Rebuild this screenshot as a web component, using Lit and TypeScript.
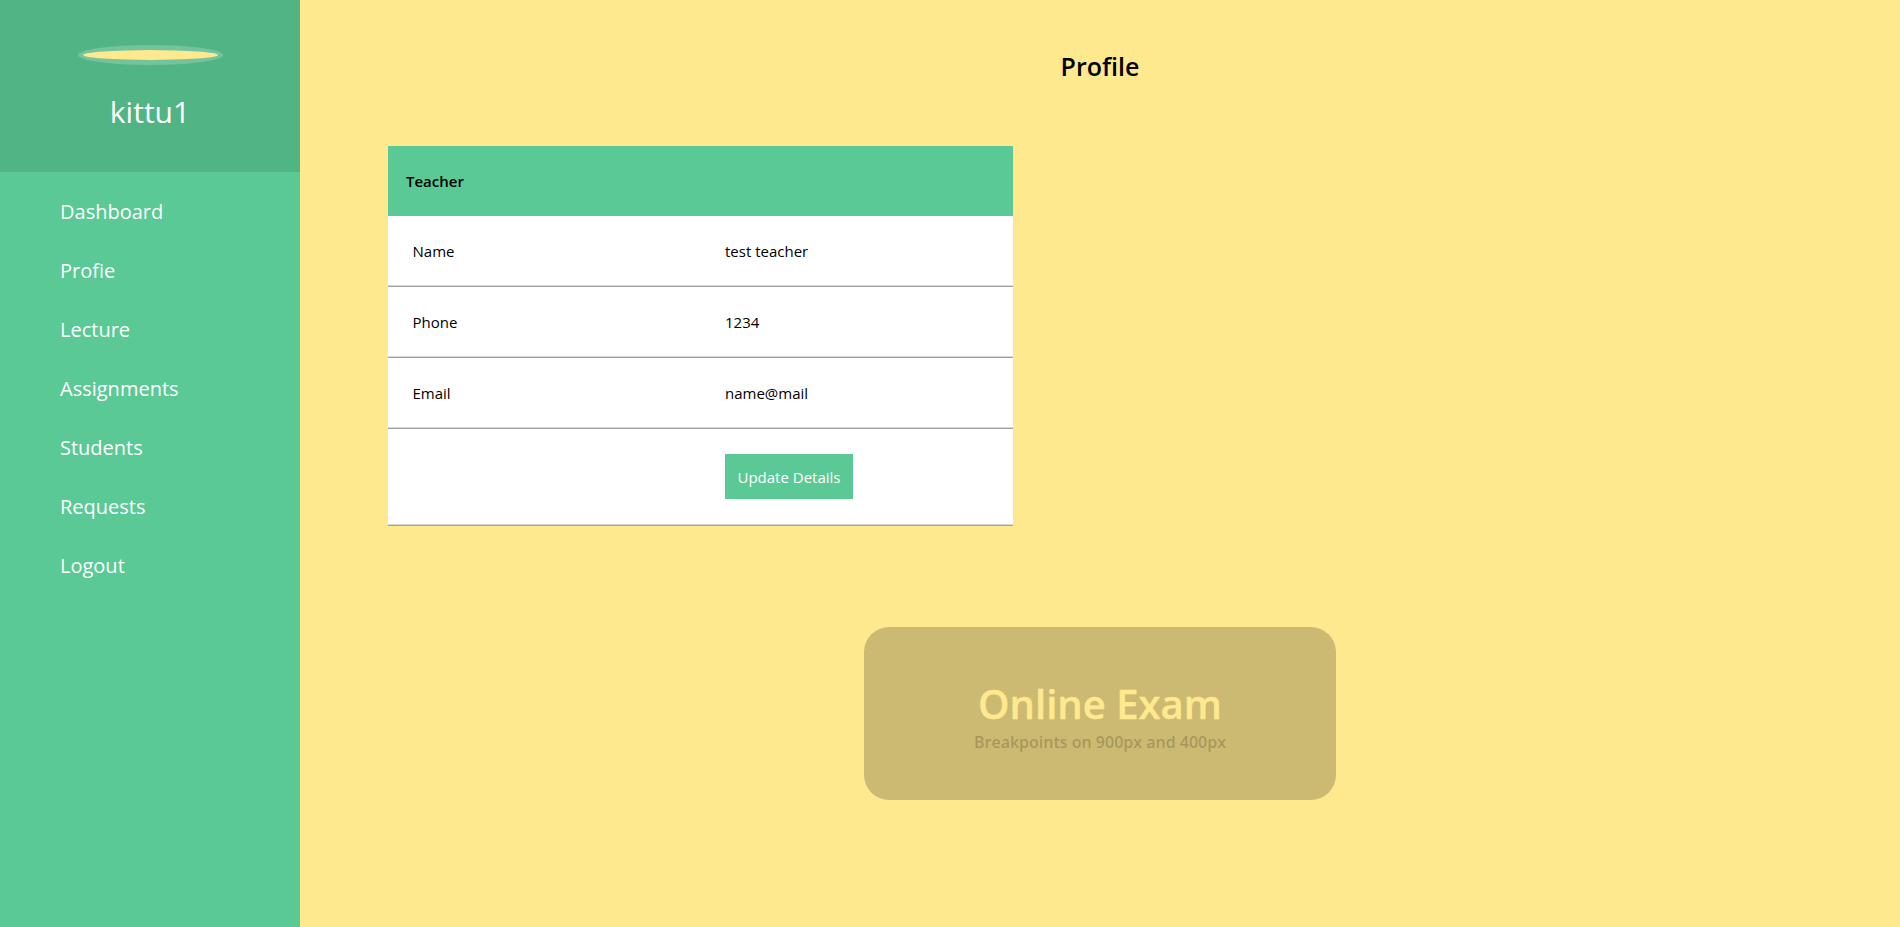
import { LitElement, html, css } from "lit";
import { customElement } from "lit/decorators.js";

const NAV = ["Dashboard", "Profie", "Lecture", "Assignments", "Students", "Requests", "Logout"];
const ROWS = [
  ["Name", "test teacher"],
  ["Phone", "1234"],
  ["Email", "name@mail"],
];

@customElement("app-root")
export class AppRoot extends LitElement {
  static styles = css`
    :host {
      display: flex;
      width: 100%;
      height: 927px;
      overflow: hidden;
      background: #ffe98f;
      font-family: "Open Sans", sans-serif;
      color: #000;
    }
    .sidebar {
      flex: 0 0 300px;
      background: #5ac995;
      color: #fff;
    }
    .brand {
      height: 172px;
      box-sizing: border-box;
      padding-top: 45px;
      background: rgba(0, 0, 0, 0.1);
      display: flex;
      flex-direction: column;
      align-items: center;
    }
    .avatar {
      width: 135px;
      height: 10px;
      border: 5px solid rgba(255, 255, 255, 0.2);
      border-radius: 50%;
      background: #ffe98f;
      background-clip: padding-box;
    }
    .brand-name {
      margin-top: 25px;
      font-size: 30px;
      line-height: 44px;
    }
    nav {
      display: flex;
      flex-direction: column;
      padding-top: 11px;
    }
    nav a {
      display: block;
      height: 59px;
      line-height: 57px;
      padding-left: 60px;
      font-size: 20px;
      color: #fff;
    }
    main {
      flex: 1;
      display: flex;
      flex-direction: column;
    }
    h1 {
      flex: none;
      margin: 0;
      padding-top: 49px;
      height: 146px;
      box-sizing: border-box;
      text-align: center;
      font-size: 25px;
      line-height: 34px;
      font-weight: 600;
    }
    table {
      margin-left: 88px;
      width: 625px;
      border-collapse: separate;
      border-spacing: 0;
      table-layout: fixed;
      background: #fff;
      font-size: 15px;
    }
    th {
      height: 70px;
      padding: 0 0 0 18px;
      background: #5ac995;
      text-align: left;
      font-size: 15px;
      font-weight: 600;
    }
    td {
      height: 70px;
      padding: 0 24px 0 24.5px;
      border-bottom: 1px solid #a0a0a0;
      box-shadow: inset 0 -1px 0 #d8d8d8;
    }
    tr.action td {
      height: 94px;
      padding-bottom: 2px;
    }
    button {
      display: block;
      width: 128px;
      height: 45px;
      margin-left: -0.5px;
      padding: 1px 0 0 1px;
      border: none;
      background: #5ac995;
      color: #fff;
      font-family: inherit;
      font-size: 15px;
    }
    .panel {
      align-self: center;
      margin-top: 101px;
      width: 472px;
      height: 173px;
      box-sizing: border-box;
      padding-top: 55px;
      border-radius: 25px;
      background: rgba(0, 0, 0, 0.2);
      text-align: center;
    }
    .panel-title {
      font-size: 40px;
      line-height: 44px;
      font-weight: 600;
      color: #ffe98f;
      -webkit-text-stroke: 0.4px #ffe98f;
    }
    .panel-sub {
      margin-top: 5px;
      font-size: 16px;
      line-height: 22px;
      font-weight: 600;
      color: rgba(0, 0, 0, 0.2);
    }
  `;

  render() {
    return html`
      <aside class="sidebar">
        <div class="brand">
          <div class="avatar"></div>
          <div class="brand-name">kittu1</div>
        </div>
        <nav>${NAV.map((n) => html`<a>${n}</a>`)}</nav>
      </aside>
      <main>
        <h1>Profile</h1>
        <table>
          <thead>
            <tr><th colspan="2">Teacher</th></tr>
          </thead>
          <tbody>
            ${ROWS.map(([k, v]) => html`<tr><td>${k}</td><td>${v}</td></tr>`)}
            <tr class="action">
              <td></td>
              <td><button>Update Details</button></td>
            </tr>
          </tbody>
        </table>
        <div class="panel">
          <div class="panel-title">Online Exam</div>
          <div class="panel-sub">Breakpoints on 900px and 400px</div>
        </div>
      </main>
    `;
  }
}
